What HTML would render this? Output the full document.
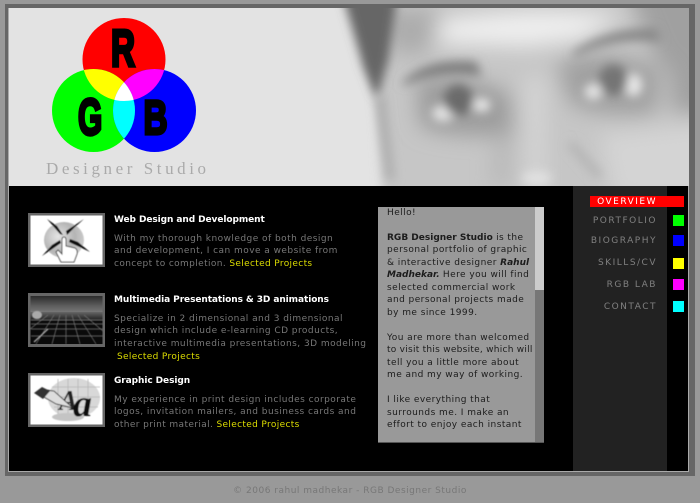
<!DOCTYPE html>
<html><head><meta charset="utf-8"><title>RGB Designer Studio</title>
<style>
html,body{margin:0;padding:0}
body{width:700px;height:503px;overflow:hidden;background:#999;position:relative;font-family:"DejaVu Sans","Liberation Sans",sans-serif;font-size:9px}
div{position:absolute}
.l{white-space:pre;line-height:12px;color:#777;letter-spacing:.46px}
.h{white-space:pre;line-height:12px;color:#fff;font-weight:bold;letter-spacing:-.08px}
.y{color:#dd0;letter-spacing:.34px}
.s{white-space:pre;line-height:12px;color:#1c1c1c;letter-spacing:.44px}
.s b{letter-spacing:0}
.n{white-space:pre;right:43px;font-family:"DejaVu Sans",sans-serif;font-size:9px;line-height:10px;color:#808080;letter-spacing:1.5px}
.q{left:673px;width:11px;height:11px}
</style></head><body>
<div style="left:5px;top:4px;width:690px;height:472px;background:#666"></div>
<div style="left:8px;top:8px;width:681px;height:464px;background:#aaa"></div>
<div style="left:9px;top:186px;width:679px;height:285px;background:#000"></div>
<svg style="position:absolute;left:9px;top:8px" width="680" height="178" viewBox="9 8 680 178">
<defs>
<filter id="b" x="-30%" y="-30%" width="160%" height="160%"><feGaussianBlur stdDeviation="32"/></filter>
<filter id="bh" x="-60%" y="-30%" width="220%" height="160%"><feGaussianBlur stdDeviation="15"/></filter>
<filter id="b2" x="-40%" y="-40%" width="180%" height="180%"><feGaussianBlur stdDeviation="15"/></filter>
<clipPath id="cr"><circle cx="124" cy="59.500" r="41.500"/></clipPath>
<clipPath id="cg"><circle cx="93.500" cy="110.500" r="41.500"/></clipPath>
<clipPath id="cb"><circle cx="154.500" cy="110.500" r="41.500"/></clipPath>
</defs>
<rect x="9" y="8" width="680" height="178" fill="#e3e3e3"/>
<g transform="translate(340 0) scale(.3333)">
<path d="M100 -60H1200V700H135L110 300L80 200Z" fill="#c6c6c6" filter="url(#bh)"/>
<g filter="url(#b)">
<path d="M300 60Q600 10 850 50L720 120L560 140L300 130Z" fill="#efefef"/>
<path d="M850 -60H1200V200H960Z" fill="#a0a0a0"/>
<path d="M980 120H1200V340H1000Z" fill="#a0a0a0"/>
<path d="M130 30H300L260 160L160 160Z" fill="#acacac"/>
<path d="M230 240Q340 210 510 280L520 400Q360 420 240 380Z" fill="#9c9c9c"/>
<path d="M650 190Q800 130 960 210L950 340Q800 360 690 310Z" fill="#a0a0a0"/>
<path d="M560 230H610V600H570Z" fill="#d8d8d8"/>
<path d="M470 400L510 400L500 560L460 560Z" fill="#b4b4b4"/>
<path d="M780 400L1200 360V600H820Z" fill="#d4d4d4"/>
</g>
<path d="M0 -40H175L145 180L110 300L70 200Z" fill="#666" filter="url(#bh)"/>
<path d="M105 290L140 540L165 540L135 290Z" fill="#acacac" filter="url(#bh)"/>
<g filter="url(#b2)">
<path d="M185 250Q260 170 410 185L425 230Q300 210 195 255Z" fill="#808080"/>
<path d="M695 160Q800 80 950 85L965 125Q830 110 705 170Z" fill="#888"/>
<ellipse cx="310" cy="340" rx="34" ry="24" fill="#e6e6e6"/>
<ellipse cx="425" cy="315" rx="26" ry="20" fill="#ececec"/>
<ellipse cx="760" cy="275" rx="26" ry="24" fill="#e6e6e6"/>
<ellipse cx="880" cy="255" rx="26" ry="34" fill="#eaeaea"/>
<ellipse cx="355" cy="300" rx="44" ry="46" fill="#6a6a6a"/>
<ellipse cx="820" cy="240" rx="44" ry="46" fill="#747474"/>
<path d="M690 430L780 530" stroke="#b4b4b4" stroke-width="24" fill="none"/>
<ellipse cx="590" cy="535" rx="45" ry="20" fill="#e2e2e2"/>
</g>
</g>
<circle cx="124" cy="59.500" r="41.500" fill="#f00"/>
<circle cx="93.500" cy="110.500" r="41.500" fill="#0f0"/>
<circle cx="154.500" cy="110.500" r="41.500" fill="#00f"/>
<circle cx="93.500" cy="110.500" r="41.500" fill="#ff0" clip-path="url(#cr)"/>
<circle cx="154.500" cy="110.500" r="41.500" fill="#f0f" clip-path="url(#cr)"/>
<g clip-path="url(#cg)"><circle cx="154.500" cy="110.500" r="41.500" fill="#0ff"/></g>
<g clip-path="url(#cr)"><g clip-path="url(#cg)"><circle cx="154.500" cy="110.500" r="41.500" fill="#fff"/></g></g>
<g font-family="Liberation Sans,sans-serif" font-weight="bold" font-size="52" fill="#000" stroke="#000" stroke-width="3.500">
<text transform="translate(111 66) scale(.64 1)">R</text>
<text transform="translate(78 134.500) scale(.6 .98)">G</text>
<text transform="translate(143.500 134) scale(.64 .92)">B</text>
</g>
<text x="46" y="174" font-family="Liberation Serif,serif" font-size="17" fill="#aaa" textLength="160" lengthAdjust="spacing">Designer Studio</text>
</svg>

<!-- thumb 1 -->
<svg style="position:absolute;left:28px;top:213px" width="77" height="54" viewBox="0 0 77 54">
<defs><filter id="t"><feGaussianBlur stdDeviation=".45"/></filter>
<linearGradient id="sky" x1="0" y1="0" x2="0" y2="1"><stop offset="0" stop-color="#2a2a2a"/><stop offset=".6" stop-color="#5c5c5c"/><stop offset="1" stop-color="#777"/></linearGradient>
<linearGradient id="hz" x1="0" y1="0" x2="0" y2="1"><stop offset="0" stop-color="#666"/><stop offset="1" stop-color="#181818"/></linearGradient>
<radialGradient id="ball" cx=".35" cy=".4" r=".7"><stop offset="0" stop-color="#e4e4e4"/><stop offset=".6" stop-color="#b4b4b4"/><stop offset="1" stop-color="#d0d0d0"/></radialGradient>
</defs>
<rect width="77" height="54" fill="#666"/><rect x="2.500" y="2.500" width="72" height="49" fill="#fff"/>
<g filter="url(#t)">
<ellipse cx="36" cy="27" rx="20" ry="18" fill="url(#ball)"/>
<path d="M19 6L29 13L35 22L32 21Z M56 6L46 15L39 22L38 18Z M14 43L24 32L32 27L33 30Z M62 39L50 29L42 26L41 29Z" fill="#111"/>
<path d="M34 27Q34 24 36 24Q38 24 38 27L38 33L47 35Q50 37 49 41L46 49L33 49L28 39L30 37L34 41Z" fill="#fff" stroke="#444" stroke-width="1"/>
</g></svg>
<!-- thumb 2 -->
<svg style="position:absolute;left:28px;top:293px" width="77" height="54" viewBox="0 0 77 54">
<rect width="77" height="54" fill="#666"/><rect x="2.500" y="3" width="72" height="48" fill="#0a0a0a"/>
<rect x="2.500" y="3" width="72" height="16" fill="url(#sky)"/>
<rect x="2.500" y="19" width="72" height="9" fill="url(#hz)"/>
<g filter="url(#t)" stroke="#777" stroke-width=".7" fill="none">
<path d="M3 27H75M3 31H75M3 36H75M3 43H75"/>
<path d="M38 22L38 51M32 22L24 51M44 22L52 51M26 22L8 51M50 22L68 51M20 22L2 36M56 22L75 38"/>
<path d="M20 36L6 49" stroke="#aaa" stroke-width="1.200"/>
<ellipse cx="9" cy="22" rx="5" ry="4" fill="#aaa" stroke="none"/>
</g></svg>
<!-- thumb 3 -->
<svg style="position:absolute;left:28px;top:373px" width="77" height="54" viewBox="0 0 77 54">
<rect width="77" height="54" fill="#666"/><rect x="2.500" y="2.500" width="72" height="49" fill="#fff"/>
<g filter="url(#t)">
<ellipse cx="46" cy="25" rx="26" ry="20" fill="#d8d8d8"/>
<path d="M30 6V44M40 6V44M50 6V44M60 6V40M24 14H72M24 24H72M26 34H70" stroke="#b4b4b4" stroke-width=".8"/>
<ellipse cx="40" cy="44" rx="16" ry="4" fill="#c4c4c4"/>
<text x="31" y="37" font-family="Liberation Serif,serif" font-style="italic" font-weight="bold" font-size="28" fill="#222">A</text>
<text x="45" y="43" font-family="Liberation Serif,serif" font-style="italic" font-weight="bold" font-size="38" fill="#111">a</text>
<path d="M18 17L26 18L45 35L28 31L16 24Z" fill="#ddd" stroke="#222" stroke-width=".9"/>
<path d="M6 20L14 14L22 18L15 26Z" fill="#333"/>
</g></svg>

<div class="h" style="left:114px;top:214px">Web Design and Development</div>
<div class="l" style="left:114px;top:233px">With my thorough knowledge of both design</div>
<div class="l" style="left:114px;top:245px">and development, I can move a website from</div>
<div class="l" style="left:114px;top:258px;letter-spacing:.38px">concept to completion. <span class="y">Selected Projects</span></div>

<div class="h" style="left:114px;top:294px">Multimedia Presentations &amp; 3D animations</div>
<div class="l" style="left:114px;top:313px">Specialize in 2 dimensional and 3 dimensional</div>
<div class="l" style="left:114px;top:325px">design which include e-learning CD products,</div>
<div class="l" style="left:114px;top:338px">interactive multimedia presentations, 3D modeling</div>
<div class="l y" style="left:117px;top:351px;color:#dd0">Selected Projects</div>

<div class="h" style="left:114px;top:375px">Graphic Design</div>
<div class="l" style="left:114px;top:394px">My experience in print design includes corporate</div>
<div class="l" style="left:114px;top:406px">logos, invitation mailers, and business cards and</div>
<div class="l" style="left:114px;top:419px;letter-spacing:.38px">other print material. <span class="y">Selected Projects</span></div>

<div style="left:378px;top:207px;width:166px;height:235px;background:#999;border-bottom:1px solid #555"></div>
<div style="left:535px;top:207px;width:9px;height:235px;background:#777"></div>
<div style="left:535px;top:207px;width:9px;height:83px;background:#ccc"></div>
<div class="s" style="left:387px;top:207px">Hello!</div>
<div class="s" style="left:387px;top:232px"><b>RGB Designer Studio</b> is the</div>
<div class="s" style="left:387px;top:244px">personal portfolio of graphic</div>
<div class="s" style="left:387px;top:257px">&amp; interactive designer <b><i>Rahul</i></b></div>
<div class="s" style="left:387px;top:269px"><b><i>Madhekar.</i></b> Here you will find</div>
<div class="s" style="left:387px;top:282px">selected commercial work</div>
<div class="s" style="left:387px;top:294px">and personal projects made</div>
<div class="s" style="left:387px;top:307px">by me since 1999.</div>
<div class="s" style="left:387px;top:332px">You are more than welcomed</div>
<div class="s" style="left:387px;top:344px;letter-spacing:.26px">to visit this website, which will</div>
<div class="s" style="left:387px;top:357px">tell you a little more about</div>
<div class="s" style="left:387px;top:369px">me and my way of working.</div>
<div class="s" style="left:387px;top:394px">I like everything that</div>
<div class="s" style="left:387px;top:407px">surrounds me. I make an</div>
<div class="s" style="left:387px;top:419px">effort to enjoy each instant</div>

<div style="left:573px;top:186px;width:94px;height:285px;background:#222"></div>
<div style="left:590px;top:196px;width:94px;height:11px;background:#f00"></div>
<div class="n" style="top:197px;color:#fff">OVERVIEW</div>
<div class="n" style="top:216px">PORTFOLIO</div>
<div class="n" style="top:236px">BIOGRAPHY</div>
<div class="n" style="top:258px">SKILLS/CV</div>
<div class="n" style="top:280px">RGB LAB</div>
<div class="n" style="top:302px">CONTACT</div>
<div class="q" style="top:215px;background:#0f0"></div>
<div class="q" style="top:235px;background:#00f"></div>
<div class="q" style="top:258px;background:#ff0"></div>
<div class="q" style="top:279px;background:#f0f"></div>
<div class="q" style="top:301px;background:#0ff"></div>

<div style="left:0;width:700px;top:485px;text-align:center;line-height:12px;color:#777;letter-spacing:.5px;white-space:pre">© 2006 rahul madhekar - RGB Designer Studio</div>
</body></html>
